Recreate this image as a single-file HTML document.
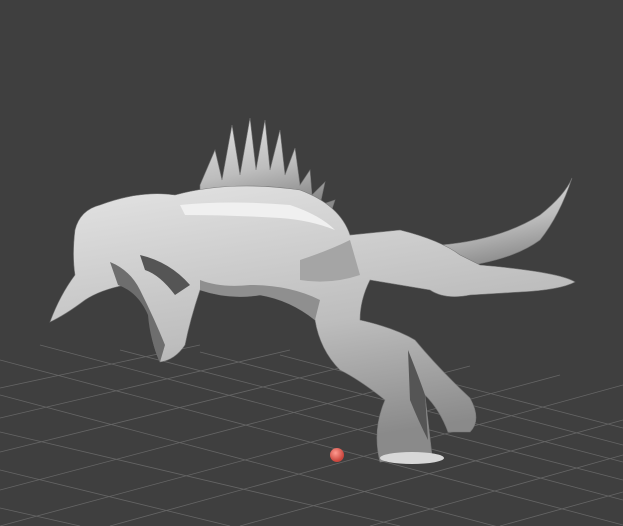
<!DOCTYPE html>
<html><head><style>
html,body{margin:0;padding:0;background:#3f3f3f;width:623px;height:526px;overflow:hidden}
svg{display:block}
</style></head><body>
<svg width="623" height="526" viewBox="0 0 623 526" xmlns="http://www.w3.org/2000/svg">
<defs>
<linearGradient id="g" x1="0" y1="0" x2="0.3" y2="1">
<stop offset="0" stop-color="#e4e4e4"/><stop offset="0.6" stop-color="#bdbdbd"/><stop offset="1" stop-color="#8a8a8a"/>
</linearGradient>
<radialGradient id="r" cx="0.4" cy="0.35" r="0.6"><stop offset="0" stop-color="#ff9a90"/><stop offset="1" stop-color="#c9453c"/></radialGradient>
</defs>
<rect width="623" height="526" fill="#3f3f3f"/>
<g stroke="#6a6a6a" stroke-width="0.8" opacity="0.9">
<line x1="0" y1="395" x2="623" y2="560"/>
<line x1="0" y1="360" x2="623" y2="525"/>
<line x1="40" y1="345" x2="623" y2="500"/>
<line x1="120" y1="350" x2="623" y2="480"/>
<line x1="200" y1="352" x2="623" y2="462"/>
<line x1="280" y1="355" x2="623" y2="445"/>
<line x1="350" y1="357" x2="623" y2="428"/>
<line x1="0" y1="432" x2="400" y2="526"/>
<line x1="0" y1="470" x2="230" y2="526"/>
<line x1="0" y1="508" x2="80" y2="526"/>
<line x1="0" y1="418" x2="290" y2="350"/>
<line x1="0" y1="452" x2="380" y2="358"/>
<line x1="0" y1="490" x2="470" y2="366"/>
<line x1="0" y1="526" x2="560" y2="375"/>
<line x1="110" y1="526" x2="623" y2="385"/>
<line x1="240" y1="526" x2="623" y2="420"/>
<line x1="370" y1="526" x2="623" y2="455"/>
<line x1="500" y1="526" x2="623" y2="492"/>
<line x1="0" y1="388" x2="200" y2="345"/>
</g>
<g fill="url(#g)" stroke="#777" stroke-width="0.6">
<path d="M200 185 L215 150 L222 180 L232 125 L240 175 L250 118 L256 170 L265 120 L270 170 L280 130 L285 175 L295 148 L300 185 L310 170 L312 195 L325 182 L320 205 L335 200 L330 215 L200 200Z"/>
<path d="M440 245 Q500 240 540 215 Q565 195 572 178 Q560 215 540 240 Q510 262 450 268Z"/>
<path d="M100 205 Q140 190 175 195 Q230 180 300 190 Q340 205 350 235 L400 230 Q440 240 460 255 L480 265 Q560 272 575 282 Q560 290 520 292 L470 295 Q445 300 430 290 Q400 285 370 280 Q360 300 360 320 Q395 328 415 340 Q440 370 470 398 Q482 420 470 432 L448 432 Q440 410 425 395 L432 455 L380 462 Q372 430 385 400 Q360 380 340 370 Q320 350 315 320 Q290 300 260 295 Q230 300 200 290 Q190 320 185 345 Q175 360 160 362 Q150 340 150 315 Q140 290 125 285 Q100 290 85 300 Q65 315 50 322 Q60 295 75 275 Q72 255 75 230 Q80 210 100 205Z"/>
<path d="M110 262 Q130 270 140 290 Q155 320 165 345 L160 362 Q150 340 148 315 Q138 292 118 285Z" fill="#6e6e6e" stroke="none"/>
<path d="M140 255 Q170 262 190 285 L175 295 Q160 275 145 270Z" fill="#555" stroke="none"/>
<path d="M408 350 Q420 380 425 395 L428 440 Q418 420 410 400Z" fill="#555" stroke="none"/>
<path d="M300 260 Q330 250 350 240 L360 275 Q330 285 300 280Z" fill="#a5a5a5" stroke="none"/>
<path d="M200 290 Q230 300 260 295 Q290 300 315 320 L320 300 Q290 285 250 285 Q220 288 200 280Z" fill="#8f8f8f" stroke="none"/>
<path d="M180 205 Q230 200 290 205 Q320 215 335 230 Q310 220 280 218 Q230 215 185 215Z" fill="#f0f0f0" stroke="none"/>
</g>
<ellipse cx="412" cy="458" rx="32" ry="6" fill="#d8d8d8"/>
<circle cx="337" cy="455" r="7" fill="url(#r)"/>
</svg>
</body></html>
